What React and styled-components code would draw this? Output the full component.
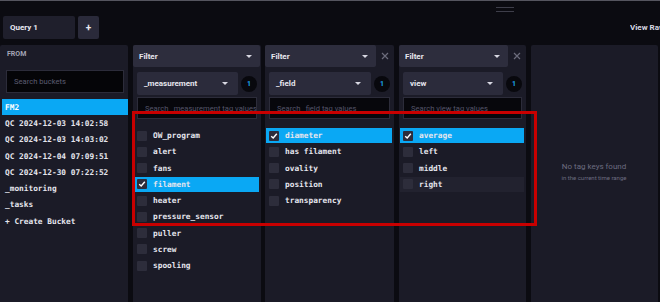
import styled, { createGlobalStyle } from "styled-components";

const Global = createGlobalStyle`
  html, body { margin: 0; padding: 0; background: #0b0b11; }
  body { width: 660px; height: 302px; overflow: hidden; font-family: "Roboto", "Liberation Sans", sans-serif; }
`;

const Page = styled.div`
  position: relative;
  width: 660px;
  height: 302px;
  background: #0b0b11;
  border-top: 1px solid #55555f;
  box-sizing: border-box;
  display: flex;
  flex-direction: column;
  overflow: hidden;
`;

const TopBar = styled.div`
  height: 44px;
  display: flex;
  align-items: flex-start;
  padding: 15px 0 0 3px;
  box-sizing: border-box;
`;

const Tab = styled.div`
  width: 72px;
  height: 23px;
  background: #1f1f2c;
  color: #e8e8f0;
  font-size: 8px;
  font-weight: 700;
  display: flex;
  align-items: center;
  padding-left: 7px;
  box-sizing: border-box;
  border-radius: 2px;
`;

const PlusButton = styled.div`
  width: 21px;
  height: 23px;
  margin-left: 3px;
  background: #2a2a3a;
  color: #e8e8f0;
  font-size: 10px;
  font-weight: 700;
  display: flex;
  align-items: center;
  justify-content: center;
  border-radius: 2px;
`;

const ViewRaw = styled.div`
  margin-left: auto;
  margin-top: 7px;
  width: 30px;
  color: #d8d8e2;
  font-size: 8px;
  font-weight: 700;
  white-space: nowrap;
  overflow: hidden;
`;

const Handle = styled.div`
  position: absolute;
  left: 496px;
  top: 6px;
  width: 18px;
  height: 3px;
  border-top: 1px solid #3e3e4a;
  border-bottom: 1px solid #3e3e4a;
`;

const Columns = styled.div`
  flex: 1;
  display: flex;
  align-items: stretch;
`;

const Panel = styled.div`
  width: ${(p) => p.$w}px;
  margin-left: ${(p) => p.$ml || 0}px;
  background: #1b1b27;
  border-radius: 2px 2px 0 0;
  display: flex;
  flex-direction: column;
  padding: ${(p) => (p.$from ? "0 0 0 2px" : "0 1px 0 0")};
  box-sizing: border-box;
`;

const FromLabel = styled.div`
  color: #a4a4b4;
  font-size: 7px;
  font-weight: 700;
  padding: 5px 0 0 5px;
  height: 25px;
  box-sizing: border-box;
`;

const BucketSearch = styled.div`
  margin: 0 4px 6px 4px;
  height: 23px;
  background: #050508;
  border: 1px solid #2c2c3a;
  box-sizing: border-box;
  color: #5c5c70;
  font-size: 7.6px;
  display: flex;
  align-items: center;
  padding-left: 7px;
`;

const Mono = styled.div`
  font-family: "DejaVu Sans Mono", "Liberation Mono", monospace;
  font-size: 7.8px;
  font-weight: 700;
  white-space: nowrap;
`;

const Bucket = styled(Mono)`
  height: 16.3px;
  display: flex;
  align-items: center;
  padding-left: 3px;
  color: ${(p) => (p.$sel ? "#ffffff" : "#e6e6ee")};
  background: ${(p) => (p.$sel ? "#0aa8f4" : "transparent")};
`;

const HeaderRow = styled.div`
  display: flex;
  height: 22px;
`;

const FilterBar = styled.div`
  flex: 1;
  background: #2d2d3d;
  color: #e6e6ee;
  font-size: 8px;
  font-weight: 700;
  display: flex;
  align-items: center;
  padding: 0 8px 0 6px;
  border-radius: 2px;
`;

const Caret = styled.span`
  margin-left: auto;
  width: 0;
  height: 0;
  border-left: 3px solid transparent;
  border-right: 3px solid transparent;
  border-top: 3px solid #d8d8e2;
`;

const Close = styled.div`
  width: 17px;
  display: flex;
  align-items: center;
  justify-content: center;
  color: #6c6c7c;
`;

const KeyRow = styled.div`
  display: flex;
  align-items: center;
  margin: 5px 3px 2px 4px;
  height: 23px;
`;

const KeyDropdown = styled(FilterBar)`
  height: 23px;
  background: #2b2b3b;
  padding-left: 7px;
  padding-right: 10px;
`;

const Badge = styled.div`
  width: 16px;
  height: 16px;
  margin-left: 3px;
  border-radius: 50%;
  background: #08080d;
  color: #1aa6f0;
  font-size: 7px;
  font-weight: 700;
  display: flex;
  align-items: center;
  justify-content: center;
`;

const TagSearch = styled.div`
  margin: 0 3px 0 4px;
  height: 22px;
  background: #07070c;
  border: 1px solid #2c2c3a;
  box-sizing: border-box;
  color: #55556a;
  font-size: 7.6px;
  display: flex;
  align-items: center;
  padding-left: 7px;
  white-space: nowrap;
  overflow: hidden;
`;

const List = styled.div`
  margin-top: 9px;
  padding: 0 1px;
  display: flex;
  flex-direction: column;
  gap: 1.25px;
`;

const Item = styled(Mono)`
  height: 15px;
  display: flex;
  align-items: center;
  padding-left: 3px;
  color: #e6e6ee;
  background: ${(p) => (p.$sel ? "#0aa8f4" : p.$hover ? "#22222f" : "transparent")};
`;

const Box = styled.span`
  width: 10px;
  height: 10px;
  margin-right: 6px;
  border-radius: 1px;
  background: #2d2d3b;
  display: flex;
  align-items: center;
  justify-content: center;
`;

const Empty = styled.div`
  flex: 1;
  display: flex;
  flex-direction: column;
  align-items: center;
  justify-content: center;
  padding-bottom: 4px;
  color: #6c6c80;
  gap: 3px;
`;

const EmptyTitle = styled.div`
  font-size: 8px;
`;

const EmptySub = styled.div`
  font-size: 6px;
`;

const Highlight = styled.div`
  position: absolute;
  left: 132px;
  top: 110px;
  width: 405px;
  height: 115px;
  border: 3px solid #c80000;
  box-sizing: border-box;
  pointer-events: none;
`;

function Check() {
  return (
    <svg width="8" height="8" viewBox="0 0 8 8">
      <path d="M1.2 4.2 L3.2 6 L6.8 1.8" fill="none" stroke="#ffffff" strokeWidth="1.4" />
    </svg>
  );
}

function X() {
  return (
    <svg width="8" height="8" viewBox="0 0 8 8">
      <path d="M1 1 L7 7 M7 1 L1 7" stroke="#6c6c7c" strokeWidth="1.2" />
    </svg>
  );
}

function FilterPanel({ w, ml, closable, tagKey, search, items, selected, hover }) {
  return (
    <Panel $w={w} $ml={ml}>
      <HeaderRow>
        <FilterBar>
          Filter
          <Caret />
        </FilterBar>
        {closable && (
          <Close>
            <X />
          </Close>
        )}
      </HeaderRow>
      <KeyRow>
        <KeyDropdown>
          {tagKey}
          <Caret />
        </KeyDropdown>
        <Badge>1</Badge>
      </KeyRow>
      <TagSearch>{search}</TagSearch>
      <List>
        {items.map((it) => (
          <Item key={it} $sel={it === selected} $hover={it === hover}>
            <Box>{it === selected && <Check />}</Box>
            {it}
          </Item>
        ))}
      </List>
    </Panel>
  );
}

const buckets = [
  "FM2",
  "QC 2024-12-03 14:02:58",
  "QC 2024-12-03 14:03:02",
  "QC 2024-12-04 07:09:51",
  "QC 2024-12-30 07:22:52",
  "_monitoring",
  "_tasks",
  "+ Create Bucket",
];

export default function App() {
  return (
    <>
      <Global />
      <Page>
        <Handle />
        <TopBar>
          <Tab>Query 1</Tab>
          <PlusButton>+</PlusButton>
          <ViewRaw>View Raw</ViewRaw>
        </TopBar>
        <Columns>
          <Panel $w={128} $from>
            <FromLabel>FROM</FromLabel>
            <BucketSearch>Search buckets</BucketSearch>
            {buckets.map((b) => (
              <Bucket key={b} $sel={b === "FM2"}>
                {b}
              </Bucket>
            ))}
          </Panel>
          <FilterPanel
            w={128}
            ml={5}
            tagKey="_measurement"
            search="Search _measurement tag values"
            items={["OW_program", "alert", "fans", "filament", "heater", "pressure_sensor", "puller", "screw", "spooling"]}
            selected="filament"
          />
          <FilterPanel
            w={129}
            ml={4}
            closable
            tagKey="_field"
            search="Search _field tag values"
            items={["diameter", "has filament", "ovality", "position", "transparency"]}
            selected="diameter"
          />
          <FilterPanel
            w={127}
            ml={5}
            closable
            tagKey="view"
            search="Search view tag values"
            items={["average", "left", "middle", "right"]}
            selected="average"
            hover="right"
          />
          <Panel $w={127} $ml={5}>
            <Empty>
              <EmptyTitle>No tag keys found</EmptyTitle>
              <EmptySub>in the current time range</EmptySub>
            </Empty>
          </Panel>
        </Columns>
        <Highlight />
      </Page>
    </>
  );
}
